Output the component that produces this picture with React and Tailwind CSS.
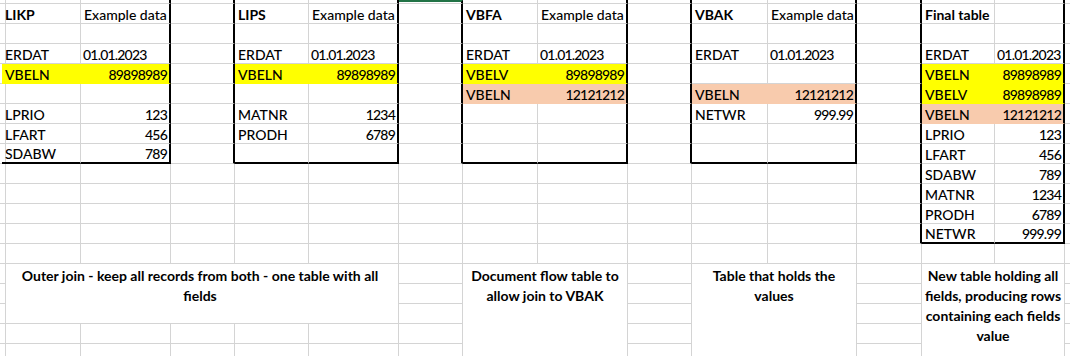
import React from "react";
import clsx from "clsx";

// sheet contents: row -> column -> cell. column 0 is the sliver left of column A
// n = number (right aligned), d = date, b = bold, f = fill (y yellow / s salmon)
const CELLS = {
  1: {
    1: { t: "LIKP", b: true }, 2: { t: "Example data" },
    4: { t: "LIPS", b: true }, 5: { t: "Example data" },
    7: { t: "VBFA", b: true }, 8: { t: "Example data" },
    10: { t: "VBAK", b: true }, 11: { t: "Example data" },
    13: { t: "Final table", b: true },
  },
  3: {
    1: { t: "ERDAT" }, 2: { t: "01.01.2023", d: true },
    4: { t: "ERDAT" }, 5: { t: "01.01.2023", d: true },
    7: { t: "ERDAT" }, 8: { t: "01.01.2023", d: true },
    10: { t: "ERDAT" }, 11: { t: "01.01.2023", d: true },
    13: { t: "ERDAT" }, 14: { t: "01.01.2023", d: true },
  },
  4: {
    1: { t: "VBELN", f: "y" }, 2: { t: "89898989", n: true, f: "y" },
    4: { t: "VBELN", f: "y" }, 5: { t: "89898989", n: true, f: "y" },
    7: { t: "VBELV", f: "y" }, 8: { t: "89898989", n: true, f: "y" },
    13: { t: "VBELN", f: "y" }, 14: { t: "89898989", n: true, f: "y" },
  },
  5: {
    7: { t: "VBELN", f: "s" }, 8: { t: "12121212", n: true, f: "s" },
    10: { t: "VBELN", f: "s" }, 11: { t: "12121212", n: true, f: "s" },
    13: { t: "VBELV", f: "y" }, 14: { t: "89898989", n: true, f: "y" },
  },
  6: {
    1: { t: "LPRIO" }, 2: { t: "123", n: true },
    4: { t: "MATNR" }, 5: { t: "1234", n: true },
    10: { t: "NETWR" }, 11: { t: "999.99", n: true },
    13: { t: "VBELN", f: "s" }, 14: { t: "12121212", n: true, f: "s" },
  },
  7: {
    1: { t: "LFART" }, 2: { t: "456", n: true },
    4: { t: "PRODH" }, 5: { t: "6789", n: true },
    13: { t: "LPRIO" }, 14: { t: "123", n: true },
  },
  8: {
    1: { t: "SDABW" }, 2: { t: "789", n: true },
    13: { t: "LFART" }, 14: { t: "456", n: true },
  },
  9: { 13: { t: "SDABW" }, 14: { t: "789", n: true } },
  10: { 13: { t: "MATNR" }, 14: { t: "1234", n: true } },
  11: { 13: { t: "PRODH" }, 14: { t: "6789", n: true } },
  12: { 13: { t: "NETWR" }, 14: { t: "999.99", n: true } },
};

// merged comment cells, all starting on row 14
const NOTES = {
  1: { span: "col-span-5 row-span-3", cols: [1, 2, 3, 4, 5], rows: 3, lines: ["Outer join - keep all records from both - one table with all", "fields"] },
  7: { span: "col-span-2 row-span-5", cols: [7, 8], rows: 5, lines: ["Document flow table to", "allow join to VBAK"] },
  10: { span: "col-span-2 row-span-5", cols: [10, 11], rows: 5, lines: ["Table that holds the", "values"] },
  13: { span: "col-span-2 row-span-5", cols: [13, 14], rows: 5, lines: ["New table holding all", "fields, producing rows", "containing each fields", "value"] },
};

const ROWS = 19;
const COLS = 16;

const covered = (r, c) =>
  Object.values(NOTES).some((n) => r >= 14 && r < 14 + n.rows && n.cols.includes(c));

// medium borders round the five tables
const thickRight = (r, c) =>
  (r <= 8 && [2, 3, 5, 6, 8, 9, 11].includes(c)) || (r <= 12 && (c === 12 || c === 14));
const thickBottom = (r, c) =>
  (r === 8 && [1, 2, 4, 5, 7, 8, 10, 11].includes(c)) || (r === 12 && (c === 13 || c === 14));

function Cell({ r, c }) {
  const cell = (CELLS[r] && CELLS[r][c]) || null;
  const fill = cell?.f;
  return (
    <div
      className={clsx(
        "flex items-center whitespace-nowrap pr-[2px] pt-px",
        cell?.d ? "pl-[2px]" : "pl-[3px]",
        fill === "y" && "bg-[#ffff00]",
        fill === "s" && "bg-[#f8cbad]",
        thickRight(r, c)
          ? "border-r-2 border-r-black"
          : fill === "y"
          ? "border-r border-r-[#ffff00]"
          : fill === "s"
          ? "border-r border-r-[#f8cbad]"
          : "border-r border-r-[#d4d4d4]",
        thickBottom(r, c)
          ? "border-b-2 border-b-black"
          : fill === "y"
          ? "border-b border-b-[#ffff00]"
          : fill === "s"
          ? "border-b border-b-[#f8cbad]"
          : "border-b border-b-[#d4d4d4]",
        r === 0 && c === 6 && "border-t-2 border-t-[#217346]",
        cell?.n && "justify-end tracking-[-0.8px]",
        cell?.d && "tracking-[-0.8px]",
        cell?.b ? "font-bold" : "font-medium"
      )}
    >
      {cell?.t}
    </div>
  );
}

function Note({ note }) {
  return (
    <div
      className={clsx(
        note.span,
        "border-r border-b border-[#d4d4d4] pt-[2px] text-center font-bold leading-[20px] whitespace-nowrap"
      )}
    >
      {note.lines.map((l, i) => (
        <div key={i}>{l}</div>
      ))}
    </div>
  );
}

export default function App() {
  const items = [];
  for (let r = 0; r < ROWS; r++) {
    for (let c = 0; c < COLS; c++) {
      if (r === 14 && NOTES[c]) {
        items.push(<Note key={`${r}-${c}`} note={NOTES[c]} />);
      } else if (!covered(r, c)) {
        items.push(<Cell key={`${r}-${c}`} r={r} c={c} />);
      }
    }
  }

  return (
    <div className="w-[1070px] h-[356px] overflow-hidden bg-white text-black text-[14px] font-[Lato,'Liberation_Sans',sans-serif]">
      <div className="grid grid-cols-[2px_79px_90px_64px_74px_90px_64px_75px_90px_64px_76px_89px_65px_73px_70px_80px] grid-rows-[4px_repeat(18,20px)] w-max">
        {items}
      </div>
    </div>
  );
}
